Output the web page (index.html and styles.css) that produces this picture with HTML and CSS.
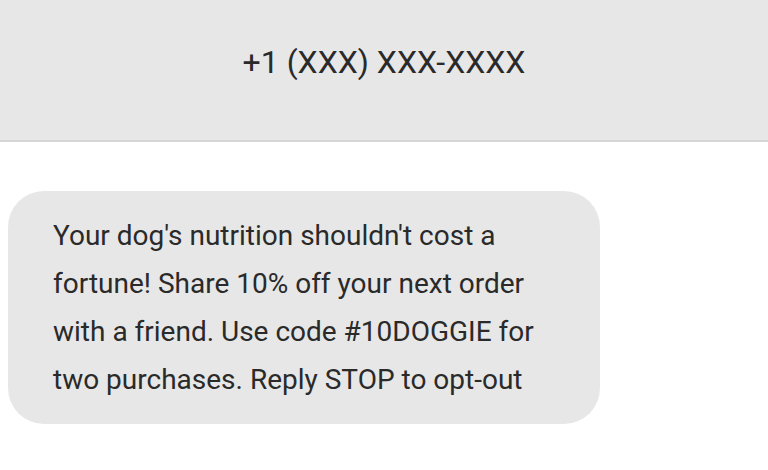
FILE: index.html
```html
<!DOCTYPE html>
<html lang="en">
<head>
    <meta charset="utf-8">
    <title>Message</title>
    <link rel="stylesheet" href="styles.css">
</head>
<body>

<!-- Contact Header -->
<div class="header">
    <span class="phone">+1 (XXX) XXX-XXXX</span>
</div>

<!-- Conversation -->
<div class="thread">
    <div class="bubble">
        Your dog's nutrition shouldn't cost a<br>
        fortune! Share 10% off your next order<br>
        with a friend. Use code #10DOGGIE for<br>
        two purchases. Reply STOP to opt-out
    </div>
</div>

</body>
</html>
```

FILE: styles.css
```css
/* General Layout */
body {
    margin: 0;
    padding: 0;
    background: #ffffff;
    color: #2a2a2a;
    font-family: Roboto, 'Noto Sans', sans-serif;
}

/* Header */
.header {
    height: 140px;
    background: #e7e7e7;
    border-bottom: 2px solid #d6d6d6;
    display: flex;
    justify-content: center;
    align-items: center;
}

.phone {
    font-size: 32px;
    margin-top: -16px;
}

/* Thread */
.thread {
    padding: 49px 8px 0;
}

.bubble {
    width: 547px;
    padding: 21px 0 20px 45px;
    background: #e7e7e7;
    border-radius: 36px;
    font-size: 28px;
    line-height: 48px;
}
```
